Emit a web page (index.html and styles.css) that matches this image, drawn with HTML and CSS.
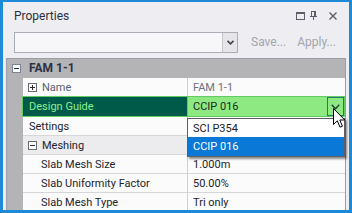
FILE: index.html
```html
<!DOCTYPE html>
<html>
<head>
<meta charset="utf-8">
<link rel="stylesheet" href="styles.css">
</head>
<body>
<div class="panel">
  <div class="titlebar">
    <span class="title">Properties</span>
    <div class="winbtns">
      <svg class="wicon max" width="9" height="8" viewBox="0 0 9 8"><rect x="0.5" y="0.5" width="8" height="7" fill="none" stroke="#5a5e6a"/><rect x="0" y="0" width="9" height="2" fill="#5a5e6a"/></svg>
      <svg class="wicon pin" width="7" height="9" viewBox="0 0 7 9"><rect x="1.5" y="0.5" width="4" height="5" fill="none" stroke="#5a5e6a"/><rect x="4" y="0.5" width="1.5" height="5" fill="#5a5e6a"/><rect x="0" y="5" width="7" height="1" fill="#5a5e6a"/><rect x="3" y="6" width="1" height="3" fill="#5a5e6a"/></svg>
      <svg class="wicon close" width="8" height="8" viewBox="0 0 8 8"><path d="M0.5 0.5 L7.5 7.5 M7.5 0.5 L0.5 7.5" stroke="#5a5e6a" stroke-width="1.4"/></svg>
    </div>
  </div>
  <div class="toolbar">
    <div class="combo">
      <div class="combo-field"></div>
      <div class="combo-btn"><svg width="7" height="5" viewBox="0 0 7 5"><path d="M0.5 0.8 L3.5 3.8 L6.5 0.8" fill="none" stroke="#444" stroke-width="1.6"/></svg></div>
    </div>
    <span class="tbtn save">Save...</span>
    <span class="tbtn">Apply...</span>
  </div>
  <div class="grid">
    <div class="cat">
      <span class="box"><svg width="9" height="9" viewBox="0 0 9 9"><rect x="0.5" y="0.5" width="8" height="8" fill="#fff" stroke="#7a8494"/><rect x="2" y="4" width="5" height="1" fill="#1c2a4a"/></svg></span>
      <span class="cat-text">FAM 1-1</span>
    </div>
    <div class="rows">
      <div class="row">
        <div class="label sub"><span class="sbox"><svg width="9" height="9" viewBox="0 0 9 9"><rect x="0.5" y="0.5" width="8" height="8" fill="#fff" stroke="#6a6a70"/><rect x="2" y="4" width="5" height="1" fill="#2a2a30"/><rect x="4" y="2" width="1" height="5" fill="#2a2a30"/></svg></span><span class="muted">Name</span></div>
        <div class="value muted2">FAM 1-1</div>
      </div>
      <div class="row sel">
        <div class="label">Design Guide</div>
        <div class="value">CCIP 016
          <span class="dd-btn"><svg width="9" height="6" viewBox="0 0 9 6"><path d="M0.8 0.8 L4.5 4.8 L8.2 0.8" fill="none" stroke="#1d3a2e" stroke-width="1.3"/></svg></span>
        </div>
      </div>
      <div class="row">
        <div class="label">Settings</div>
        <div class="value"></div>
      </div>
      <div class="row group">
        <div class="label sub"><span class="sbox"><svg width="9" height="9" viewBox="0 0 9 9"><rect x="0.5" y="0.5" width="8" height="8" fill="#fff" stroke="#6a6a70"/><rect x="2" y="4" width="5" height="1" fill="#2a2a30"/></svg></span><span>Meshing</span></div>
        <div class="value"></div>
      </div>
      <div class="row">
        <div class="label indent">Slab Mesh Size</div>
        <div class="value">1.000m</div>
      </div>
      <div class="row">
        <div class="label indent">Slab Uniformity Factor</div>
        <div class="value">50.00%</div>
      </div>
      <div class="row">
        <div class="label indent">Slab Mesh Type</div>
        <div class="value">Tri only</div>
      </div>
    </div>
    <div class="popup">
      <div class="item">SCI P354</div>
      <div class="item active">CCIP 016</div>
    </div>
    <svg class="cursor" width="13" height="21" viewBox="0 0 13 21"><path d="M0.5 0.5 L0.5 16.5 L4.3 12.8 L7 19.2 L9.4 18.2 L6.8 12 L11.8 12 Z" fill="#fff" stroke="#000" stroke-width="1" stroke-linejoin="miter"/></svg>
  </div>
</div>
</body>
</html>
```

FILE: styles.css
```css
* { box-sizing: border-box; }
html, body { margin: 0; padding: 0; }
body {
  width: 352px;
  height: 213px;
  overflow: hidden;
  font-family: Roboto, "Liberation Sans", sans-serif;
}
.panel {
  width: 352px;
  height: 213px;
  border: 3px solid #1c8ad6;
  border-top-width: 2px;
  background: #eeeef2;
  overflow: hidden;
  display: flex;
  flex-direction: column;
}
.titlebar {
  height: 27px;
  flex: none;
  display: flex;
  align-items: center;
  padding-left: 11px;
  padding-right: 12px;
}
.title {
  font-size: 12px;
  color: #2b2f3a;
  flex: 1;
}
.winbtns {
  display: flex;
  align-items: center;
}
.wicon { display: block; }
.wicon.pin { margin-left: 5px; margin-right: 12px; }
.toolbar {
  flex: none;
  height: 29px;
  display: flex;
  align-items: flex-start;
  padding-top: 3px;
  padding-left: 11px;
}
.combo {
  width: 224px;
  height: 21px;
  border: 1px solid #abadb6;
  background: #f7f7f9;
  display: flex;
}
.combo-field { flex: 1; }
.combo-btn {
  width: 15px;
  border-left: 1px solid #c4c6cc;
  background: #e6e6ea;
  display: flex;
  align-items: center;
  justify-content: center;
}
.combo-btn svg { display: block; }
.tbtn {
  font-size: 12px;
  color: #a2a4ae;
  line-height: 21px;
  margin-left: 11px;
}
.tbtn.save { margin-left: 13px; }
.grid {
  position: relative;
  flex: none;
  width: 340px;
  height: 160px;
  margin-left: 3px;
  border: 1px solid #9c9ca4;
  border-bottom: none;
  background: #b4b4b6;
  font-size: 11px;
}
.cat {
  height: 19px;
  display: flex;
  align-items: center;
  border-bottom: 1px solid #b4b4b6;
}
.box { width: 9px; height: 9px; margin-left: 5px; display: block; }
.box svg, .sbox svg { display: block; }
.cat-text {
  margin-left: 8px;
  font-weight: bold;
  font-size: 12px;
  color: #2c3244;
}
.rows { margin-left: 16px; }
.row {
  height: 19px;
  display: flex;
  border-bottom: 1px solid #d6d6d8;
  background: #fbfbfb;
}
.label {
  width: 165px;
  border-right: 1px solid #cfcfd2;
  display: flex;
  align-items: center;
  padding-left: 6px;
  color: #22242c;
  white-space: nowrap;
}
.label.sub { padding-left: 5px; }
.sbox { width: 9px; height: 9px; margin-right: 5px; }
.label.indent { padding-left: 18px; }
.value {
  flex: 1;
  display: flex;
  align-items: center;
  padding-left: 5px;
  color: #22242c;
  position: relative;
}
.muted { color: #586070; }
.muted2 { color: #6c7080; }
.row.group { background: #ececee; }
.row.sel {
  height: 21px;
  margin-top: -1px;
  margin-left: -1px;
  border: 1px solid #62cc62;
  background: #8fe982;
}
.row.sel .label {
  background: #005a4a;
  color: #8cf08c;
  border-right: 1px solid #62cc62;
  width: 165px;
}
.row.sel .value { color: #1a2a1c; }
.dd-btn {
  position: absolute;
  right: 0;
  top: 0;
  width: 17px;
  height: 19px;
  border: 1px solid #237a68;
  display: flex;
  align-items: center;
  justify-content: center;
}
.dd-btn svg { display: block; }
.popup {
  position: absolute;
  left: 180px;
  top: 59px;
  width: 158px;
  border: 1px solid #5e5e64;
  background: #fff;
  box-shadow: 2px 2px 2px rgba(0,0,0,0.45);
}
.item {
  height: 18px;
  display: flex;
  align-items: center;
  padding-left: 5px;
  font-size: 11px;
  color: #1c1e26;
}
.item.active {
  height: 19px;
  background: #0a78d6;
  color: #fff;
}
.cursor {
  position: absolute;
  left: 326px;
  top: 49px;
}
```
